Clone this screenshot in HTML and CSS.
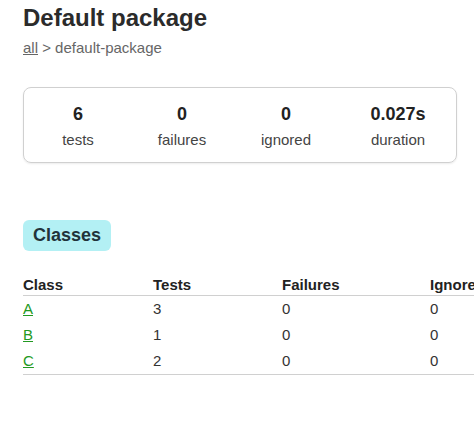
FILE: index.html
```html
<!DOCTYPE html>
<html lang="en">
<head>
  <meta charset="UTF-8" />
  <title>Test results - Default package</title>
  <link rel="stylesheet" href="styles.css">
</head>
<body>

<div class="content">
  <h1>Default package</h1>
  <div class="breadcrumbs"><a href="#">all</a> &gt; default-package</div>

  <div class="summary">
    <div class="counter">
      <div class="value">6</div>
      <div class="label">tests</div>
    </div>
    <div class="counter">
      <div class="value">0</div>
      <div class="label">failures</div>
    </div>
    <div class="counter">
      <div class="value">0</div>
      <div class="label">ignored</div>
    </div>
    <div class="counter">
      <div class="value">0.027s</div>
      <div class="label">duration</div>
    </div>
  </div>

  <ul class="tabLinks">
    <li class="selected">Classes</li>
  </ul>

  <table class="classes">
    <thead>
      <tr>
        <th class="col-class">Class</th>
        <th class="col-tests">Tests</th>
        <th class="col-failures">Failures</th>
        <th class="col-ignored">Ignored</th>
        <th class="col-duration">Duration</th>
        <th class="col-rate">Success rate</th>
      </tr>
    </thead>
    <tbody>
      <tr>
        <td class="success"><a href="#">A</a></td>
        <td>3</td>
        <td>0</td>
        <td>0</td>
        <td>0.013s</td>
        <td class="success">100%</td>
      </tr>
      <tr>
        <td class="success"><a href="#">B</a></td>
        <td>1</td>
        <td>0</td>
        <td>0</td>
        <td>0.004s</td>
        <td class="success">100%</td>
      </tr>
      <tr>
        <td class="success"><a href="#">C</a></td>
        <td>2</td>
        <td>0</td>
        <td>0</td>
        <td>0.010s</td>
        <td class="success">100%</td>
      </tr>
    </tbody>
  </table>
</div>

</body>
</html>
```

FILE: styles.css
```css
html {
  overflow: hidden;
}

body {
  margin: 0;
  font-family: 'Liberation Sans', Arial, sans-serif;
  font-size: 15px;
  color: #222;
  background: #fff;
}

.content {
  padding: 4px 23px;
  width: 820px;
}

h1 {
  margin: 0;
  font-size: 24px;
  line-height: 28px;
  color: #2b2b2b;
}

.breadcrumbs {
  margin-top: 7px;
  line-height: 18px;
  color: #666;
}

.breadcrumbs a {
  color: #666;
}

.summary {
  display: grid;
  grid-template-columns: 108px 100px 108px 116px;
  width: 434px;
  box-sizing: border-box;
  margin-top: 30px;
  padding: 15px 0 14px;
  border: 1px solid #d0d0d0;
  border-radius: 8px;
  box-shadow: 0 1px 2px rgba(0,0,0,0.08);
}

.counter {
  text-align: center;
  white-space: nowrap;
}

.counter .value {
  font-size: 18px;
  font-weight: bold;
  color: #222;
  line-height: 22px;
}

.counter .label {
  margin-top: 7px;
  line-height: 16px;
  color: #444;
}

.tabLinks {
  list-style: none;
  margin: 57px 0 0;
  padding: 0;
}

.tabLinks li {
  display: inline-block;
  padding: 5px 10px;
  line-height: 21px;
  background: #b3f0f4;
  border-radius: 6px;
  font-size: 18px;
  font-weight: bold;
  color: #22333a;
}

table.classes {
  margin-top: 17px;
  border-collapse: collapse;
  table-layout: fixed;
  width: 800px;
}

table.classes .col-class { width: 130px; }
table.classes .col-tests { width: 129px; }
table.classes .col-failures { width: 148px; }
table.classes .col-ignored { width: 130px; }
table.classes .col-duration { width: 130px; }
table.classes .col-rate { width: 133px; }

table.classes th,
table.classes td {
  text-align: left;
  padding: 0;
  height: 26px;
  line-height: 18px;
}

table.classes th {
  font-weight: bold;
  color: #222;
  vertical-align: bottom;
  padding-bottom: 1px;
  border-bottom: 1px solid #d0d0d0;
}

table.classes tbody tr:first-child td {
  vertical-align: top;
  padding-top: 4px;
  height: 22px;
}

table.classes tbody tr:last-child td {
  border-bottom: 1px solid #d0d0d0;
}

table.classes td {
  color: #333;
}

table.classes td.success a {
  color: #229922;
}
```
